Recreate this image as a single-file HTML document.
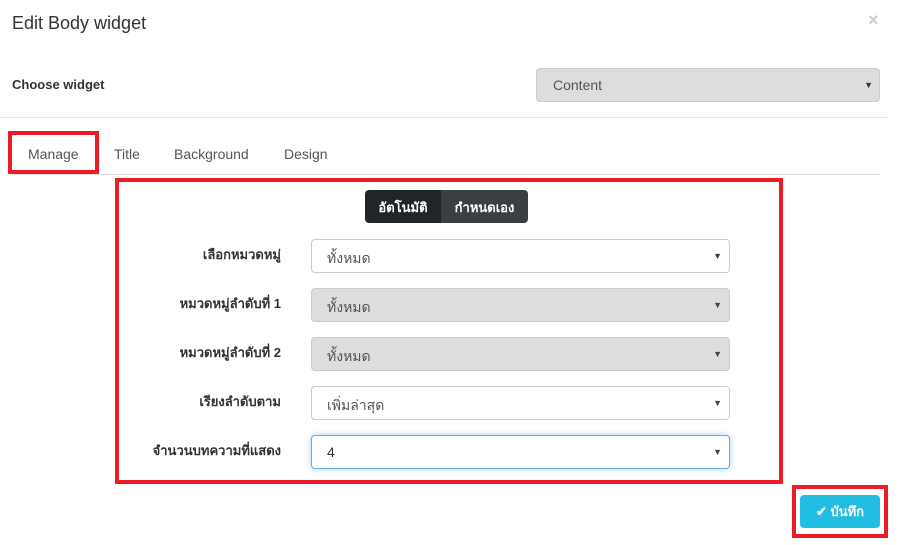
<!DOCTYPE html>
<html><head><meta charset="utf-8"><style>
body{margin:0;width:899px;height:545px;background:#fff;font-family:"Liberation Sans",sans-serif;color:#333;position:relative;overflow:hidden}
.a{position:absolute}
.sel{position:absolute;left:311px;width:417px;height:32px;border:1px solid #ccc;border-radius:4px;background:#fff;font-size:14px;line-height:32px;box-sizing:content-box}
.sel span{position:absolute;left:15px;top:2px;color:#555}
.sel i{position:absolute;right:7px;top:0;font-style:normal;font-size:9px;color:#444}
.dis{background:#ddd}
.lab{position:absolute;right:618px;font-size:13px;font-weight:bold;color:#333}
.red{position:absolute;border:4px solid #ec1c24;box-sizing:border-box}
</style></head><body>
<div class="a" style="left:12px;top:13px;font-size:18px;color:#333">Edit Body widget</div>
<div class="a" style="left:868px;top:10px;font-size:18px;color:#ccc;font-weight:bold">×</div>
<div class="a" style="left:0;top:117px;width:889px;height:1px;background:#e5e5e5"></div>
<div class="a" style="left:12px;top:77px;font-size:13px;font-weight:bold">Choose widget</div>
<div class="a" style="left:536px;top:68px;width:342px;height:32px;border:1px solid #ccc;border-radius:4px;background:#ddd;font-size:14px;line-height:32px"><span style="position:absolute;left:16px;color:#555">Content</span><i style="position:absolute;right:6px;font-style:normal;font-size:9px">▼</i></div>

<div class="a" style="left:12px;top:174px;width:868px;height:1px;background:#ddd"></div>
<div class="a" style="left:28px;top:146px;font-size:14px;color:#555">Manage</div>
<div class="a" style="left:114px;top:146px;font-size:14px;color:#555">Title</div>
<div class="a" style="left:174px;top:146px;font-size:14px;color:#555">Background</div>
<div class="a" style="left:284px;top:146px;font-size:14px;color:#555">Design</div>
<div class="red" style="left:8px;top:131px;width:91px;height:43px"></div>

<div class="a" style="left:365px;top:190px;width:76px;height:33px;background:#222528;border-radius:4px 0 0 4px;color:#fff;font-size:13px;font-weight:bold;text-align:center;line-height:35px">อัตโนมัติ</div>
<div class="a" style="left:441px;top:190px;width:87px;height:33px;background:#3a3f44;border-radius:0 4px 4px 0;color:#fff;font-size:13px;font-weight:bold;text-align:center;line-height:35px">กำหนดเอง</div>

<div class="lab" style="top:244px">เลือกหมวดหมู่</div>
<div class="sel" style="top:239px"><span>ทั้งหมด</span><i>▼</i></div>
<div class="lab" style="top:293px">หมวดหมู่ลำดับที่ 1</div>
<div class="sel dis" style="top:288px"><span>ทั้งหมด</span><i>▼</i></div>
<div class="lab" style="top:342px">หมวดหมู่ลำดับที่ 2</div>
<div class="sel dis" style="top:337px"><span>ทั้งหมด</span><i>▼</i></div>
<div class="lab" style="top:391px">เรียงลำดับตาม</div>
<div class="sel" style="top:386px"><span>เพิ่มล่าสุด</span><i>▼</i></div>
<div class="lab" style="top:440px">จำนวนบทความที่แสดง</div>
<div class="sel" style="top:435px;border-color:#66afe9;box-shadow:0 0 6px rgba(102,175,233,.6)"><span style="color:#333;top:0">4</span><i>▼</i></div>
<div class="red" style="left:115px;top:178px;width:668px;height:306px"></div>

<div class="a" style="left:800px;top:495px;width:80px;height:33px;background:#22bde2;border-radius:4px;color:#fff;font-size:13px;font-weight:bold;line-height:33px;text-align:center">✔ บันทึก</div>
<div class="red" style="left:792px;top:485px;width:96px;height:53px"></div>
</body></html>
